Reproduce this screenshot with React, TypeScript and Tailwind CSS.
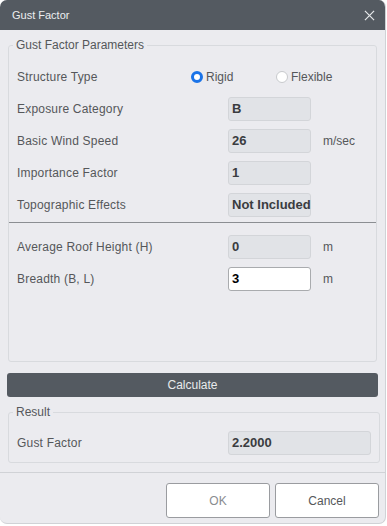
import React from "react";

// Gust Factor dialog — static recreation

const font = { fontFamily: '"Liberation Sans", Arial, sans-serif' };

function Field({ value, white = false, bold = false, className = "" }: { value: string; white?: boolean; bold?: boolean; className?: string }) {
  return (
    <div
      className={
        "h-[24px] rounded-[3px] border flex items-center px-[3px] text-[13px] text-[#3a3c40] " +
        (white ? "bg-white border-[#a9abae] " : "bg-[#e1e3e7] border-[#d3d5d9] ") +
        (bold ? "font-bold " : "font-semibold ") +
        className
      }
    >
      {value}
    </div>
  );
}

function Row({ label, children }: { label: string; children: React.ReactNode }) {
  return (
    <div className="h-[24px] flex items-center px-2">
      <div className="w-[211px] text-[12px] text-[#55575a] tracking-[0.2px]">{label}</div>
      {children}
    </div>
  );
}

function Unit({ text }: { text: string }) {
  return <span className="ml-[12px] text-[12px] text-[#55575a]">{text}</span>;
}

function Radio({ checked, label }: { checked: boolean; label: string }) {
  return (
    <div className="flex items-center gap-[3px]">
      <span
        className={
          "w-[12px] h-[12px] rounded-full " +
          (checked ? "border-[3px] border-[#1a73e8] bg-white" : "border border-[#c8cacd] bg-white")
        }
      />
      <span className="text-[12px] text-[#55575a]">{label}</span>
    </div>
  );
}

export default function App() {
  return (
    <div className="w-[387px] h-[526px] bg-white" style={font}>
      <div className="w-[386px] h-[524px] flex flex-col bg-[#ebebef] rounded-[7px] border-r border-b border-[#d0d2d6] overflow-hidden">
        {/* Title bar */}
        <div className="h-[30px] shrink-0 bg-[#545a61] flex items-center justify-between pl-[12px] pr-[10px]">
          <span className="text-[11px] text-[#eceef0]">Gust Factor</span>
          <svg viewBox="0 0 12 12" className="w-[11px] h-[11px]" fill="none" stroke="#e6e8ea" strokeWidth={1.3}>
            <path d="M1 1l10 10M11 1L1 11" />
          </svg>
        </div>

        {/* Body */}
        <div className="flex flex-col px-[8px] pt-[8px]">
          <fieldset className="h-[324px] border border-[#d8dade] rounded-[3px]">
            <legend className="ml-[4px] px-[3px] text-[12px] text-[#55575a] leading-[14px]">Gust Factor Parameters</legend>
            <div className="flex flex-col gap-[8px] pt-[13px]">
              <Row label="Structure Type">
                <div className="flex items-center -ml-[37px]">
                  <div className="w-[85px]">
                    <Radio checked label="Rigid" />
                  </div>
                  <Radio checked={false} label="Flexible" />
                </div>
              </Row>
              <Row label="Exposure Category">
                <Field value="B" className="w-[83px]" />
              </Row>
              <Row label="Basic Wind Speed">
                <Field value="26" className="w-[83px]" />
                <Unit text="m/sec" />
              </Row>
              <Row label="Importance Factor">
                <Field value="1" className="w-[83px]" />
              </Row>
              <Row label="Topographic Effects">
                <Field value="Not Included" bold className="w-[83px] whitespace-nowrap text-[13px]" />
              </Row>
            </div>
            <div className="mt-[5px] h-px bg-[#8b8e92]" />
            <div className="flex flex-col gap-[8px] pt-[12px]">
              <Row label="Average Roof Height (H)">
                <Field value="0" className="w-[83px]" />
                <Unit text="m" />
              </Row>
              <Row label="Breadth (B, L)">
                <Field value="3" white bold className="w-[83px] text-black" />
                <Unit text="m" />
              </Row>
            </div>
          </fieldset>

          <button className="mt-[11px] -mx-[1px] h-[24px] rounded-[3px] bg-[#545a61] text-[12px] text-[#e8eaec]">
            Calculate
          </button>

          <fieldset className="mt-[8px] border border-[#d8dade] rounded-[3px] pb-[7px]">
            <legend className="ml-[4px] px-[3px] text-[12px] text-[#55575a] leading-[14px]">Result</legend>
            <div className="mt-[12px] h-[24px] flex items-center px-2">
              <div className="w-[211px] text-[12px] text-[#55575a] tracking-[0.2px]">Gust Factor</div>
              <Field value="2.2000" className="w-[143px]" />
            </div>
          </fieldset>
        </div>

        <div className="mt-[9px] h-px bg-[#d0d2d6]" />

        {/* Footer */}
        <div className="flex justify-end gap-[5px] pt-[10px] pr-[6px]">
          <button className="w-[104px] h-[35px] rounded-[3px] border border-[#9a9ca0] bg-white text-[12px] text-[#8a8c90]">OK</button>
          <button className="w-[104px] h-[35px] rounded-[3px] border border-[#9a9ca0] bg-white text-[12px] text-[#55575a]">Cancel</button>
        </div>
      </div>
    </div>
  );
}
